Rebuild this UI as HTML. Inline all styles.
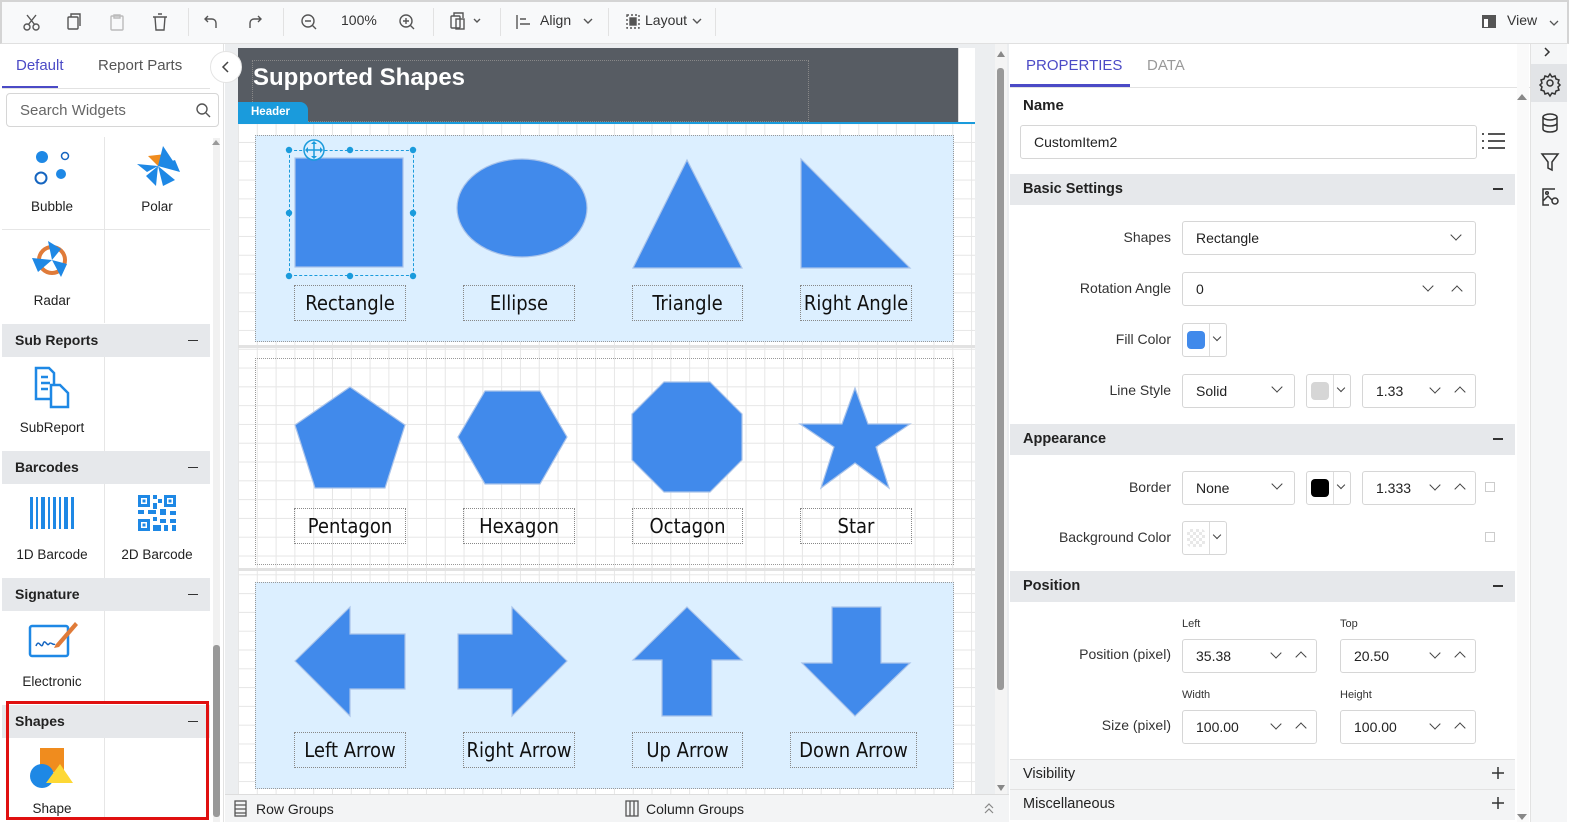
<!DOCTYPE html>
<html><head><meta charset="utf-8"><style>
*{box-sizing:border-box;margin:0;padding:0}
body{width:1569px;height:824px;overflow:hidden;font-family:"Liberation Sans",sans-serif;background:#fff;position:relative;color:#222}
.a{position:absolute}
.tb{left:0;top:0;width:1569px;height:44px;background:#f8f9fa;border:2px solid #d4d4d4;border-bottom:1px solid #e0e0e0}
.ti{position:absolute;top:12px;font-size:14px;color:#333}
.sep{position:absolute;top:8px;width:1px;height:28px;background:#e2e2e2}
.gh{position:absolute;left:2px;width:208px;height:33px;background:#e6e8eb;font-size:14px;font-weight:bold;color:#222;padding:8px 13px}
.gh:after{content:"";position:absolute;right:12px;top:16px;width:10px;height:1px;background:#333}
.wl{position:absolute;font-size:13.5px;color:#222;text-align:center;width:100px}
.cell{position:absolute;border-right:1px solid #e6e6e6;border-bottom:1px solid #e6e6e6}
.lbl{position:absolute;border:1px dotted #888;font-family:"Liberation Sans Narrow","DejaVu Sans Condensed",sans-serif;font-size:20px;color:#111;text-align:center;line-height:34px;height:36px}
.sec{position:absolute;left:255px;width:699px;border:1px dotted #999}
.pl{position:absolute;font-size:14px;color:#333;text-align:right;width:150px}
.inp{position:absolute;border:1px solid #d6d6d6;border-radius:3px;background:#fff;font-size:14px;color:#222;padding:0 13px;line-height:32px;height:34px}
.ph{position:absolute;left:1010px;width:505px;height:31px;background:#e6e8eb;font-size:14.5px;font-weight:bold;padding:7px 13px}
.ph:after{content:"";position:absolute;right:12px;top:14px;width:10px;height:1.5px;background:#333}
.chev{position:absolute;width:8px;height:8px;border-right:1.5px solid #444;border-bottom:1.5px solid #444;transform:rotate(45deg)}
.chu{position:absolute;width:8px;height:8px;border-left:1.5px solid #444;border-top:1.5px solid #444;transform:rotate(45deg)}
.sw{position:absolute;border:1px solid #d6d6d6;border-radius:3px;width:45px;height:34px;background:#fff}
.sw i{position:absolute;left:4px;top:7px;width:18px;height:18px;border-radius:4px}
.sw b{position:absolute;left:26px;top:0;width:1px;height:32px;background:#ddd}
.sub{position:absolute;font-size:11px;color:#333}
</style></head><body>
<!-- toolbar -->
<div class="a tb"></div>
<svg class="a" style="left:0;top:0" width="760" height="44" fill="none" stroke="#555" stroke-width="1.4">
<circle cx="27" cy="27" r="3"/><circle cx="36" cy="27" r="3"/><path d="M28 25 36 15M35 25 27 15"/>
<rect x="68" y="17" width="10" height="12" rx="1"/><path d="M71 17v-3h9v12"/>
<rect x="111" y="16" width="12" height="14" rx="1" stroke="#bbb"/><path d="M114 15h6v3h-6z" stroke="#bbb"/>
<path d="M153 17h14M155 17l1 13h8l1-13M158 14h4"/>
<path d="M208 16l-3 3 3 3M205 19h7a4 4 0 0 1 4 4v5"/>
<path d="M258 16l3 3-3 3M261 19h-7a4 4 0 0 0-4 4v5"/>
<circle cx="308" cy="21" r="6"/><path d="M305 21h6M312 25l4 4"/>
<circle cx="406" cy="21" r="6"/><path d="M403 21h6M406 18v6M410 25l4 4"/>
<rect x="451" y="16" width="9" height="12" rx="1"/><path d="M454 16v-3h9v5"/><rect x="456" y="19" width="8" height="10"/><path d="M474 19l3 3 3-3"/>
<path d="M517 15v14M520 19h6M520 24h10"/><path d="M584 19l4 4 4-4"/>
<rect x="627" y="15" width="12" height="13" stroke-dasharray="2 2"/><rect x="630" y="18" width="6" height="7" fill="#555"/><path d="M693 19l4 4 4-4"/>
</svg>
<div class="sep" style="left:188px"></div><div class="sep" style="left:283px"></div><div class="sep" style="left:433px"></div><div class="sep" style="left:500px"></div><div class="sep" style="left:608px"></div><div class="sep" style="left:715px"></div>
<div class="ti" style="left:341px">100%</div>
<div class="ti" style="left:540px">Align</div>
<div class="ti" style="left:645px">Layout</div>
<svg class="a" style="left:1480px;top:14px" width="85" height="18"><rect x="2" y="1" width="14" height="13" fill="#555"/><rect x="4" y="5" width="4" height="8" fill="#fff"/><path d="M70 7l4 4 4-4" stroke="#555" fill="none" stroke-width="1.3"/></svg>
<div class="ti" style="left:1507px">View</div>

<!-- left panel -->
<div class="a" style="left:2px;top:44px;width:222px;height:778px;background:#fff;border-right:1px solid #e2e2e2"></div>
<div class="a" style="left:16px;top:57px;font-size:15px;color:#4b4ac6">Default</div>
<div class="a" style="left:98px;top:57px;font-size:15px;color:#555">Report Parts</div>
<div class="a" style="left:2px;top:86px;width:56px;height:3px;background:#4b4ac6"></div>
<div class="a" style="left:2px;top:88px;width:208px;height:1px;background:#e2e2e2"></div>
<div class="a" style="left:6px;top:93px;width:213px;height:34px;border:1px solid #d6d6d6;border-radius:4px;font-size:15px;color:#666;padding:8px 13px">Search Widgets</div>
<svg class="a" style="left:195px;top:102px" width="16" height="16" fill="none" stroke="#555" stroke-width="1.4"><circle cx="7" cy="7" r="5"/><path d="M11 11l4 4"/></svg>
<div class="a" style="left:213px;top:138px;width:7px;height:684px;background:#f1f1f1"></div>
<div class="a" style="left:213px;top:645px;width:7px;height:172px;background:#999;border-radius:3px"></div>
<svg class="a" style="left:211px;top:138px" width="10" height="8"><path d="M1 7 5 2 9 7z" fill="#999"/></svg>
<!-- widget cells -->
<div class="cell" style="left:2px;top:137px;width:103px;height:93px"></div><div class="cell" style="left:105px;top:137px;width:105px;height:93px;border-right:0"></div>
<div class="cell" style="left:2px;top:230px;width:103px;height:93px;border-bottom:0"></div>
<div class="cell" style="left:2px;top:357px;width:103px;height:95px;border-bottom:0"></div>
<div class="cell" style="left:2px;top:484px;width:103px;height:94px;border-bottom:0"></div>
<div class="cell" style="left:2px;top:611px;width:103px;height:90px;border-bottom:0"></div>
<div class="cell" style="left:2px;top:738px;width:103px;height:80px;border-bottom:0"></div>
<svg class="a" style="left:30px;top:145px" width="45" height="40"><circle cx="12" cy="12" r="6" fill="#1e88e5"/><circle cx="35" cy="11" r="3.5" fill="none" stroke="#1565c0" stroke-width="1.5"/><circle cx="11" cy="33" r="5.5" fill="none" stroke="#1565c0" stroke-width="2"/><circle cx="31" cy="29" r="5" fill="#1e88e5"/></svg>
<div class="wl" style="left:2px;top:199px">Bubble</div>
<svg class="a" style="left:133px;top:144px" width="50" height="45"><path d="M25 22 15 12l18-2z" fill="#f08c1e"/><path d="M25 22 14 28l-10-8z M25 22l-2 20-10-10z M25 22l17-6 5 12z M25 22l5-20 10 15z M25 22 30 42l12-6z" fill="#1e88e5"/></svg>
<div class="wl" style="left:107px;top:199px">Polar</div>
<svg class="a" style="left:30px;top:238px" width="45" height="42"><circle cx="22" cy="22" r="13" fill="none" stroke="#e07b39" stroke-width="4"/><path d="M22 22 18 3l13 8z M22 22 2 20l6 14z M22 22l15 4-6 13z" fill="#1e88e5"/></svg>
<div class="wl" style="left:2px;top:293px">Radar</div>
<div class="gh" style="top:324px">Sub Reports</div>
<svg class="a" style="left:33px;top:365px" width="40" height="45" fill="none" stroke="#1e88e5" stroke-width="2.5"><path d="M3 3h13l5 5v26H3z M8 12h7M8 18h9M8 24h7"/><path d="M18 20h9l8 8v14H18z" fill="#fff"/></svg>
<div class="wl" style="left:2px;top:420px">SubReport</div>
<div class="gh" style="top:451px">Barcodes</div>
<svg class="a" style="left:28px;top:497px" width="50" height="34" fill="#1e88e5"><rect x="2" y="0" width="3" height="32"/><rect x="8" y="0" width="2" height="32"/><rect x="13" y="0" width="4" height="32"/><rect x="20" y="0" width="2" height="32"/><rect x="25" y="0" width="3" height="32"/><rect x="31" y="0" width="2" height="32"/><rect x="36" y="0" width="4" height="32"/><rect x="43" y="0" width="3" height="32"/></svg>
<svg class="a" style="left:138px;top:495px" width="38" height="36" fill="#1e88e5"><path d="M0 0h12v12H0z M3 3v6h6V3z M26 0h12v12H26z M29 3v6h6V3z M0 24h12v12H0z M3 27v6h6v-6z"/><rect x="4.5" y="4.5" width="3" height="3"/><rect x="30.5" y="4.5" width="3" height="3"/><rect x="4.5" y="28.5" width="3" height="3"/><path d="M15 0h4v4h-4z M20 4h4v4h-4z M15 8h4v6h-4z M0 15h6v4H0z M10 15h8v4h-8z M22 14h6v6h-6z M32 16h6v4h-6z M15 22h4v4h-4z M22 24h6v4h-6z M32 24h6v4h-6z M15 30h8v6h-8z M26 30h4v6h-4z M34 30h4v6h-4z"/></svg>
<div class="wl" style="left:2px;top:547px">1D Barcode</div>
<div class="wl" style="left:107px;top:547px">2D Barcode</div>
<div class="gh" style="top:578px">Signature</div>
<svg class="a" style="left:28px;top:618px" width="52" height="42"><rect x="2" y="8" width="38" height="30" rx="2" fill="none" stroke="#1e88e5" stroke-width="2.5"/><path d="M8 28c3-8 5 4 7-2s4 3 6 0 4 2 6 0" fill="none" stroke="#1565c0" stroke-width="1.5"/><path d="M28 26 47 4l3 3-19 22-5 1z" fill="#e07b39"/></svg>
<div class="wl" style="left:2px;top:674px">Electronic</div>
<div class="gh" style="top:705px">Shapes</div>
<svg class="a" style="left:28px;top:746px" width="48" height="46"><rect x="12" y="2" width="24" height="24" fill="#f08c1e"/><circle cx="14" cy="30" r="12" fill="#1e88e5"/><path d="M32 18l13 19H18z" fill="#fdd835"/></svg>
<div class="wl" style="left:2px;top:801px">Shape</div>
<div class="a" style="left:6px;top:701px;width:203px;height:119px;border:3px solid #e01010"></div>

<!-- canvas area -->
<div class="a" style="left:225px;top:44px;width:784px;height:750px;background:#eceef0"></div>
<div class="a" style="left:238px;top:48px;width:737px;height:746px;background-color:#fff;background-image:linear-gradient(#e6e6e6 1px,transparent 1px),linear-gradient(90deg,#e6e6e6 1px,transparent 1px);background-size:18.8px 18.8px;background-position:0 0"></div>
<div class="a" style="left:958px;top:48px;width:17px;height:74px;background:#fff;border-left:1px solid #ddd"></div>
<div class="a" style="left:238px;top:48px;width:720px;height:74px;background:#575c63"></div>
<div class="a" style="left:252px;top:60px;width:557px;height:62px;border:1px dotted #888"></div>
<div class="a" style="left:253px;top:64px;font-size:24px;font-weight:bold;color:#fff">Supported Shapes</div>
<div class="a" style="left:238px;top:102px;width:70px;height:21px;background:#1a9bdc;border-radius:0 8px 0 0;color:#fff;font-size:11.5px;font-weight:bold;padding:4px 13px">Header</div>
<div class="a" style="left:238px;top:122px;width:737px;height:2px;background:#1a9bdc"></div>
<div class="a" style="left:238px;top:345px;width:737px;height:3px;background:#e2e2e2"></div>
<div class="a" style="left:238px;top:568px;width:737px;height:3px;background:#e2e2e2"></div>
<div class="sec" style="top:135px;height:207px;background:#dcefff"></div>
<div class="sec" style="top:358px;height:207px"></div>
<div class="sec" style="top:582px;height:207px;background:#dcefff"></div>
<svg class="a" style="left:238px;top:124px" width="737" height="670" fill="#418aeb" stroke="#a9c3ea" stroke-width="1.2">
<g transform="translate(-238,-124)">
<rect x="295" y="158" width="108" height="109"/>
<ellipse cx="522" cy="208" rx="65" ry="49"/>
<path d="M633 268 687 160 742 268z"/>
<path d="M801 159V268H910z"/>
<path d="M350 387 405 425 385 488H315L295 425z"/>
<path d="M485 391H540L567 437 540 484H485L458 437z"/>
<path d="M664 382H710L742 414V460L710 492H664L632 460V414z"/>
<path d="M855 388 868 424H910L876 447 889 488 855 463 821 488 834 447 800 424H842z"/>
<path d="M295 661 350 607V634H405V689H350V716z"/>
<path d="M567 661 512 607V634H458V689H512V716z"/>
<path d="M687 607 742 660H712V716H662V660H633z"/>
<path d="M855 716 910 663H881V607H832V663H802z"/>
</g></svg>
<!-- selection -->
<div class="a" style="left:289px;top:150px;width:125px;height:126px;border:1px dashed #1a9bdc"></div>
<svg class="a" style="left:282px;top:136px" width="140" height="146" fill="#1a9bdc"><circle cx="7" cy="14" r="3.2"/><circle cx="68" cy="14" r="3.2"/><circle cx="131" cy="14" r="3.2"/><circle cx="7" cy="77" r="3.2"/><circle cx="131" cy="77" r="3.2"/><circle cx="7" cy="140" r="3.2"/><circle cx="68" cy="140" r="3.2"/><circle cx="131" cy="140" r="3.2"/><circle cx="32" cy="14" r="10" fill="#dcefff" stroke="#1a9bdc" stroke-width="1.5"/><path d="M32 7v14M25 14h14" stroke="#1a9bdc" stroke-width="1.5"/><path d="M32 5l-3 3h6z M32 23l-3-3h6z M23 14l3-3v6z M41 14l-3-3v6z"/></svg>
<div class="lbl" style="left:294px;top:285px;width:112px">Rectangle</div>
<div class="lbl" style="left:463px;top:285px;width:112px">Ellipse</div>
<div class="lbl" style="left:632px;top:285px;width:111px">Triangle</div>
<div class="lbl" style="left:800px;top:285px;width:112px">Right Angle</div>
<div class="lbl" style="left:294px;top:508px;width:112px">Pentagon</div>
<div class="lbl" style="left:463px;top:508px;width:112px">Hexagon</div>
<div class="lbl" style="left:632px;top:508px;width:111px">Octagon</div>
<div class="lbl" style="left:800px;top:508px;width:112px">Star</div>
<div class="lbl" style="left:294px;top:732px;width:112px">Left Arrow</div>
<div class="lbl" style="left:463px;top:732px;width:112px">Right Arrow</div>
<div class="lbl" style="left:632px;top:732px;width:111px">Up Arrow</div>
<div class="lbl" style="left:790px;top:732px;width:127px">Down Arrow</div>
<!-- collapse button on top -->
<div class="a" style="left:210px;top:51px;width:32px;height:32px;border-radius:50%;background:#fff;border:1px solid #e4e4e4"></div>
<svg class="a" style="left:219px;top:60px" width="14" height="14"><path d="M9 2 4 7l5 5" stroke="#444" fill="none" stroke-width="1.5"/></svg>
<!-- canvas scrollbar -->
<div class="a" style="left:995px;top:44px;width:12px;height:750px;background:#f4f4f4"></div>
<div class="a" style="left:997px;top:68px;width:7px;height:622px;background:#999;border-radius:3px"></div>
<svg class="a" style="left:995px;top:48px" width="12" height="746"><path d="M2 9 6 3 10 9z M2 737 6 743 10 737z" fill="#888"/></svg>
<!-- bottom bar -->
<div class="a" style="left:225px;top:794px;width:784px;height:28px;background:#f3f4f5;border-top:1px solid #ddd"></div>
<svg class="a" style="left:234px;top:800px" width="16" height="18" fill="none" stroke="#555" stroke-width="1.3"><rect x="1" y="1" width="11" height="15"/><path d="M1 5h11M1 9h11M1 13h11"/></svg>
<div class="a" style="left:256px;top:801px;font-size:14px;color:#222">Row Groups</div>
<svg class="a" style="left:625px;top:800px" width="16" height="18" fill="none" stroke="#555" stroke-width="1.3"><rect x="1" y="1" width="12" height="15"/><path d="M5 1v15M9 1v15"/></svg>
<div class="a" style="left:646px;top:801px;font-size:14px;color:#222">Column Groups</div>
<svg class="a" style="left:982px;top:801px" width="14" height="16" fill="none" stroke="#888" stroke-width="1.2"><path d="M3 7l4-4 4 4M3 12l4-4 4 4"/></svg>

<!-- right panel -->
<div class="a" style="left:1009px;top:44px;width:521px;height:778px;background:#fff"></div>
<div class="a" style="left:1026px;top:57px;font-size:15px;color:#4b4ac6">PROPERTIES</div>
<div class="a" style="left:1147px;top:57px;font-size:15px;color:#999">DATA</div>
<div class="a" style="left:1010px;top:84px;width:120px;height:3px;background:#4b4ac6"></div>
<div class="a" style="left:1010px;top:87px;width:520px;height:1px;background:#e2e2e2"></div>
<div class="a" style="left:1023px;top:97px;font-size:15px;font-weight:bold">Name</div>
<div class="inp" style="left:1020px;top:125px;width:457px;height:34px">CustomItem2</div>
<svg class="a" style="left:1481px;top:131px" width="26" height="20" stroke="#555" stroke-width="2"><path d="M1 3h2M1 10h2M1 17h2M7 3h17M7 10h17M7 17h17"/></svg>
<div class="ph" style="top:174px">Basic Settings</div>
<div class="pl" style="left:1021px;top:229px">Shapes</div>
<div class="inp" style="left:1182px;top:221px;width:294px">Rectangle</div><div class="chev" style="left:1452px;top:231px"></div>
<div class="pl" style="left:1021px;top:280px">Rotation Angle</div>
<div class="inp" style="left:1182px;top:272px;width:294px">0</div><div class="chev" style="left:1424px;top:282px"></div><div class="chu" style="left:1453px;top:287px"></div>
<div class="pl" style="left:1021px;top:331px">Fill Color</div>
<div class="sw" style="left:1182px;top:323px"><i style="background:#418aeb"></i><b></b></div><div class="chev" style="left:1214px;top:334px;width:6px;height:6px"></div>
<div class="pl" style="left:1021px;top:382px">Line Style</div>
<div class="inp" style="left:1182px;top:374px;width:113px">Solid</div><div class="chev" style="left:1273px;top:383px"></div>
<div class="sw" style="left:1306px;top:374px"><i style="background:#d6d6d6"></i><b></b></div><div class="chev" style="left:1338px;top:385px;width:6px;height:6px"></div>
<div class="inp" style="left:1362px;top:374px;width:114px">1.33</div><div class="chev" style="left:1431px;top:384px"></div><div class="chu" style="left:1456px;top:388px"></div>
<div class="ph" style="top:424px">Appearance</div>
<div class="pl" style="left:1021px;top:479px">Border</div>
<div class="inp" style="left:1182px;top:471px;width:113px">None</div><div class="chev" style="left:1273px;top:480px"></div>
<div class="sw" style="left:1306px;top:471px"><i style="background:#000"></i><b></b></div><div class="chev" style="left:1338px;top:482px;width:6px;height:6px"></div>
<div class="inp" style="left:1362px;top:471px;width:114px">1.333</div><div class="chev" style="left:1431px;top:481px"></div><div class="chu" style="left:1456px;top:485px"></div>
<div class="a" style="left:1485px;top:482px;width:10px;height:10px;border:1px solid #ccc"></div>
<div class="pl" style="left:1021px;top:529px">Background Color</div>
<div class="sw" style="left:1182px;top:521px"><i style="background:repeating-conic-gradient(#e8e8e8 0 25%,#fff 0 50%) 0 0/6px 6px"></i><b></b></div><div class="chev" style="left:1214px;top:532px;width:6px;height:6px"></div>
<div class="a" style="left:1485px;top:532px;width:10px;height:10px;border:1px solid #ccc"></div>
<div class="ph" style="top:571px">Position</div>
<div class="sub" style="left:1182px;top:618px">Left</div><div class="sub" style="left:1340px;top:618px">Top</div>
<div class="pl" style="left:1021px;top:646px">Position (pixel)</div>
<div class="inp" style="left:1182px;top:639px;width:135px">35.38</div><div class="chev" style="left:1272px;top:649px"></div><div class="chu" style="left:1297px;top:653px"></div>
<div class="inp" style="left:1340px;top:639px;width:136px">20.50</div><div class="chev" style="left:1431px;top:649px"></div><div class="chu" style="left:1456px;top:653px"></div>
<div class="sub" style="left:1182px;top:689px">Width</div><div class="sub" style="left:1340px;top:689px">Height</div>
<div class="pl" style="left:1021px;top:717px">Size (pixel)</div>
<div class="inp" style="left:1182px;top:710px;width:135px">100.00</div><div class="chev" style="left:1272px;top:720px"></div><div class="chu" style="left:1297px;top:724px"></div>
<div class="inp" style="left:1340px;top:710px;width:136px">100.00</div><div class="chev" style="left:1431px;top:720px"></div><div class="chu" style="left:1456px;top:724px"></div>
<div class="a" style="left:1010px;top:759px;width:505px;height:31px;background:#f3f4f5;border-top:1px solid #e2e2e2;font-size:14.5px;padding:6px 13px">Visibility</div>
<div class="a" style="left:1010px;top:789px;width:505px;height:31px;background:#f3f4f5;border-top:1px solid #e2e2e2;font-size:14.5px;padding:6px 13px">Miscellaneous</div>
<svg class="a" style="left:1490px;top:765px" width="16" height="46" stroke="#333" stroke-width="1.5"><path d="M2 8h12M8 2v12M2 38h12M8 32v12"/></svg>
<div class="a" style="left:1517px;top:44px;width:12px;height:778px;background:#fafafa"></div>
<svg class="a" style="left:1516px;top:92px" width="12" height="10"><path d="M1 8 6 2 11 8z" fill="#888"/></svg>
<svg class="a" style="left:1516px;top:812px" width="12" height="10"><path d="M1 2 6 8 11 2z" fill="#888"/></svg>
<!-- right icon column -->
<div class="a" style="left:1530px;top:44px;width:37px;height:778px;background:#f5f6f7;border-left:1px solid #e2e2e2"></div>
<div class="a" style="left:1531px;top:64px;width:36px;height:38px;background:#e2e4e7"></div>
<svg class="a" style="left:1530px;top:44px" width="38" height="180" fill="none" stroke="#333" stroke-width="1.5">
<path d="M15 4l4 4-4 4"/>
<circle cx="20" cy="39" r="3"/><path d="M20 30l2 3 3-1 1 3 3 1-1 3 2 2-2 2 1 3-3 1-1 3-3-1-2 3-2-3-3 1-1-3-3-1 1-3-2-2 2-2-1-3 3-1 1-3 3 1z"/>
<ellipse cx="20" cy="73" rx="7" ry="3"/><path d="M13 73v12c0 4 14 4 14 0V73M13 79c0 4 14 4 14 0"/>
<path d="M12 110h16l-6 8v8l-4-2v-6z"/>
<path d="M25 145h-12v16h6M13 157l5-5 4 4"/><circle cx="17" cy="149" r="1.3"/><circle cx="25" cy="157" r="3"/>
</svg>
</body></html>
